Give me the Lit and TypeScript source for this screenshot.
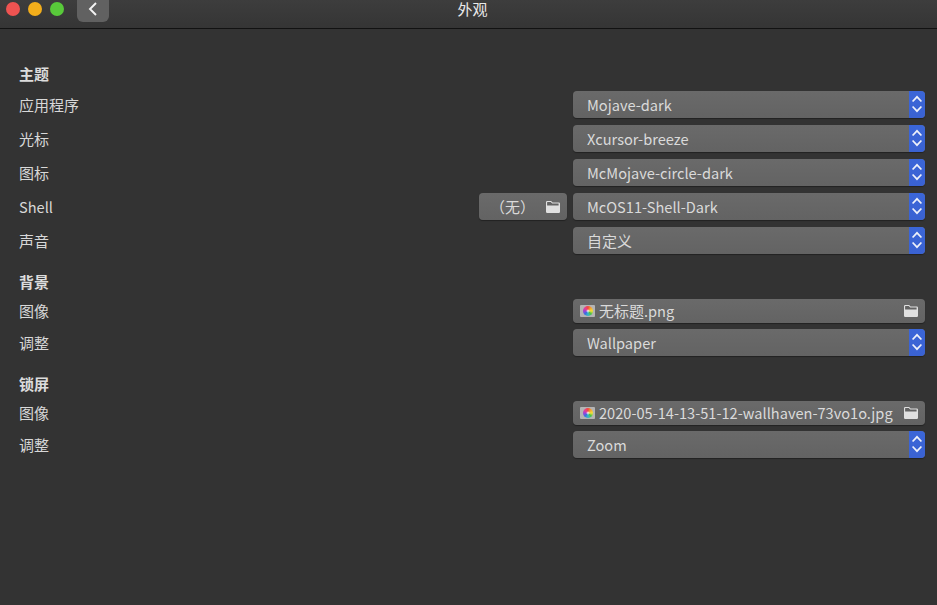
import { LitElement, html, css, svg } from "lit";
import { customElement } from "lit/decorators.js";

const folder = html`<svg class="folder" width="14" height="12" viewBox="0 0 14 12"><path d="M1.2 0h3.9l1.5 1.5h6.2a1.2 1.2 0 0 1 1.2 1.2v8.1a1.2 1.2 0 0 1-1.2 1.2H1.2A1.2 1.2 0 0 1 0 10.8V1.2A1.2 1.2 0 0 1 1.2 0z" fill="#e0e0e0"/><path d="M1.4 1.1h3.3l1.5 1.5h6.4v2H1.1V1.4z" fill="#636363"/></svg>`;

const spinner = svg`<path d="M3.6 10.5 8 5.8l4.4 4.7M3.6 15.5 8 20.2l4.4-4.7" fill="none" stroke="#eef1fa" stroke-width="1.7"/>`;

function combo(text: string, cjk = false) {
  return html`<div class="ctl combo"><span class=${cjk ? "val cjk" : "val"}>${text}</span><span class="arrows"><svg width="16" height="27" viewBox="0 0 16 27">${spinner}</svg></span></div>`;
}
function file(text: string, lead = "") {
  return html`<div class="ctl file"><span class="thumb"><span class="wheel"></span></span><span class="name"><span class="cjk">${lead}</span>${text}</span>${folder}</div>`;
}

@customElement("app-root")
export class AppRoot extends LitElement {
  static styles = css`
    :host { display: block; width: 937px; height: 605px; background: #333333; overflow: hidden;
      font-family: "Noto Sans CJK SC", "Noto Sans", sans-serif; font-size: 14.6px; color: #d8d8d8; }
    .cjk { font-size: 15px; }
    .bar { height: 28px; border-bottom: 1px solid #121212; background: linear-gradient(#3d3d3d, #353535);
      display: flex; align-items: flex-start; position: relative; }
    .lights { display: flex; gap: 8px; padding: 2px 0 0 6px; }
    .light { width: 14px; height: 14px; border-radius: 50%; }
    .back { margin-left: 13px; width: 32px; height: 22px; box-sizing: border-box; padding-bottom: 4px;
      background: #616161; border-radius: 0 0 6px 6px; display: flex; align-items: center; justify-content: center; }
    .title { position: absolute; left: 8px; right: 0; top: 0; text-align: center; color: #eaeaea;
      font-size: 15px; line-height: 18px; }
    .content { padding: 35px 12px 0 19px; display: flex; flex-direction: column; }
    .head { font-weight: 700; font-size: 15px; height: 20px; line-height: 20px; color: #dcdcdc; margin-bottom: 7px; }
    .row { display: flex; align-items: center; justify-content: space-between; margin-bottom: 7px; }
    .section { margin-bottom: 11px; }
    .label { color: #d8d8d8; }
    .label.cjk { font-size: 15px; }
    .right { display: flex; gap: 6px; }
    .ctl { box-sizing: border-box; border-radius: 4px; background: linear-gradient(#6a6a6a, #636363);
      box-shadow: 0 1px 1px #222; color: #dadada; display: flex; align-items: center; }
    .combo { width: 352px; height: 27px; padding-left: 14px; justify-content: space-between; }
    .arrows { width: 16px; height: 27px; background: linear-gradient(#3b66d8, #3a62d2); border-radius: 0 4px 4px 0;
      display: flex; align-items: center; justify-content: center; }
    .file { width: 352px; height: 24px; padding: 0 7px 0 7px; }
    .name { flex: 1; margin-left: 4px; margin-top: -1px; white-space: nowrap; overflow: hidden; }
    .thumb { flex: none; width: 15px; height: 12px; background: #b4b4b4; border-radius: 1px;
      display: flex; align-items: center; justify-content: center; }
    .wheel { width: 10px; height: 10px; border-radius: 50%; filter: blur(0.5px);
      background: radial-gradient(circle, rgba(255, 255, 255, 0.7) 0 8%, transparent 28%),
        conic-gradient(#f04a3e, #f3a530, #f4e03a, #4cc24a, #35b8c8, #3a6fe0, #a43fd6, #ea3f8c, #f04a3e); }
    .folder { flex: none; }
    .none { width: 88px; height: 27px; padding: 0 7px 0 0; }
    .none span { flex: 1; text-align: center; }
    .tight { margin-bottom: 6px; }
    .tight .label { margin-top: -2px; }
  `;

  render() {
    return html`
      <div class="bar">
        <div class="lights">
          <div class="light" style="background:#ee5351"></div>
          <div class="light" style="background:#f3ae1b"></div>
          <div class="light" style="background:#58c93a"></div>
        </div>
        <div class="back"><svg width="10" height="14" viewBox="0 0 10 14"><path d="M8 1 2 7l6 6" fill="none" stroke="#f4f4f4" stroke-width="1.9"/></svg></div>
        <div class="title">外观</div>
      </div>
      <div class="content">
        <div class="section">
          <div class="head">主题</div>
          <div class="row"><span class="label cjk">应用程序</span>${combo("Mojave-dark")}</div>
          <div class="row"><span class="label cjk">光标</span>${combo("Xcursor-breeze")}</div>
          <div class="row"><span class="label cjk">图标</span>${combo("McMojave-circle-dark")}</div>
          <div class="row"><span class="label">Shell</span>
            <div class="right"><div class="ctl none"><span class="cjk">（无）</span>${folder}</div>${combo("McOS11-Shell-Dark")}</div></div>
          <div class="row"><span class="label cjk">声音</span>${combo("自定义", true)}</div>
        </div>
        <div class="section">
          <div class="head">背景</div>
          <div class="row tight"><span class="label cjk">图像</span>${file(".png", "无标题")}</div>
          <div class="row"><span class="label cjk">调整</span>${combo("Wallpaper")}</div>
        </div>
        <div class="section">
          <div class="head">锁屏</div>
          <div class="row tight"><span class="label cjk">图像</span>${file("2020-05-14-13-51-12-wallhaven-73vo1o.jpg")}</div>
          <div class="row"><span class="label cjk">调整</span>${combo("Zoom")}</div>
        </div>
      </div>
    `;
  }
}
